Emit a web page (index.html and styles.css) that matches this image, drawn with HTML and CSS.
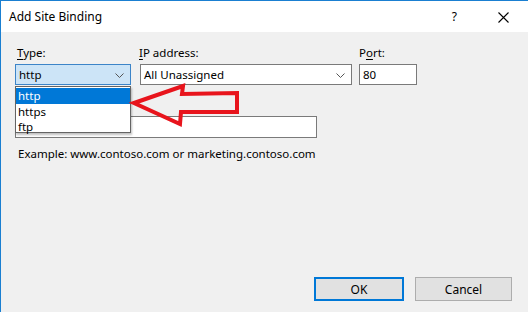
FILE: index.html
```html
<!DOCTYPE html>
<html>
<head>
<meta charset="utf-8">
<link rel="stylesheet" href="styles.css">
</head>
<body>
<div class="dialog">
  <div class="titlebar">
    <span class="title">Add Site Binding</span>
    <span class="help">?</span>
    <svg class="close" width="11" height="11" viewBox="0 0 11 11"><path d="M0.5 0.5 L10.5 10.5 M10.5 0.5 L0.5 10.5" stroke="#000" stroke-width="1.1" fill="none"/></svg>
  </div>
  <div class="content">
    <div class="row">
      <div class="field f-type">
        <label class="lbl lbl-type"><u>T</u>ype:</label>
        <div class="combo combo-active">
          <span>http</span>
          <svg class="chev" width="9" height="5" viewBox="0 0 9 5"><path d="M0.5 0.5 L4.5 4.5 L8.5 0.5" stroke="#555" fill="none"/></svg>
        </div>
      </div>
      <div class="field f-ip">
        <label class="lbl"><u>I</u>P address:</label>
        <div class="combo">
          <span>All Unassigned</span>
          <svg class="chev" width="9" height="5" viewBox="0 0 9 5"><path d="M0.5 0.5 L4.5 4.5 L8.5 0.5" stroke="#555" fill="none"/></svg>
        </div>
      </div>
      <div class="field f-port">
        <label class="lbl">P<u>o</u>rt:</label>
        <div class="input">80</div>
      </div>
    </div>
    <div class="host">
      <div class="lbl spacer"></div>
      <div class="input host-input"></div>
    </div>
    <div class="example">Example: www.contoso.com or marketing.contoso.com</div>
  </div>
  <div class="buttons">
    <button class="btn btn-ok">OK</button>
    <button class="btn btn-cancel">Cancel</button>
  </div>

  <div class="droplist">
    <div class="item sel">http</div>
    <div class="item">https</div>
    <div class="item">ftp</div>
  </div>
  <svg class="arrow" width="528" height="312" viewBox="0 0 528 312">
    <polygon points="134,103 183,86 182,94 237,93 237,112 181,112 180,124" fill="none" stroke="#e8141c" stroke-width="4" stroke-linejoin="miter"/>
  </svg>
</div>
</body>
</html>
```

FILE: styles.css
```css
* { box-sizing: border-box; }
html, body { margin: 0; padding: 0; }
body {
  width: 528px;
  height: 312px;
  overflow: hidden;
  font-family: "Noto Sans", "Open Sans", sans-serif;
  font-size: 11.5px;
  color: #000;
  background: #f0f0f0;
}
.dialog {
  position: relative;
  width: 528px;
  height: 312px;
  border-top: 1px solid #1a7fd1;
  border-left: 1px solid #1a7fd1;
  background: #f0f0f0;
  display: flex;
  flex-direction: column;
}
.titlebar {
  height: 31px;
  background: #fff;
  display: flex;
  align-items: center;
  padding-left: 8px;
  flex: none;
}
.title { flex: 1; font-size: 12px; line-height: 16px; }
.help { font-size: 12px; margin-right: 41px; line-height: 16px; }
.close { margin-right: 19px; margin-top: 1px; }
.content {
  padding: 13px 0 0 14px;
  flex: 1;
}
.row { display: flex; }
.field { display: flex; flex-direction: column; }
.f-type { width: 116px; }
.f-ip { width: 212px; margin-left: 9px; }
.f-port { width: 58px; margin-left: 7px; }
.lbl { line-height: 16px; height: 16px; margin-bottom: 3px; display: block; }
.lbl u { text-decoration: underline; text-underline-offset: 2px; }
.lbl-type { padding-left: 2px; }
.f-ip .lbl { margin-left: -1px; }
.combo {
  height: 21px;
  border: 1px solid #7a7a7a;
  background: #fff;
  display: flex;
  align-items: center;
  padding-left: 3px;
  justify-content: space-between;
  padding-right: 6px;
  line-height: 16px;
}
.combo-active { background: #cce4f7; border-color: #3c84c8; }
.chev { margin-top: 1px; }
.input {
  height: 21px;
  border: 1px solid #7a7a7a;
  background: #fff;
  padding-left: 3px;
  line-height: 19px;
}
.host { margin-top: 12px; }
.host-input { width: 302px; height: 22px; }
.example { margin-top: 8px; padding-left: 3px; line-height: 16px; }
.buttons {
  display: flex;
  justify-content: flex-end;
  gap: 11px;
  padding: 0 16px 11px 0;
  flex: none;
}
.btn {
  font-family: inherit;
  font-size: 12px;
  height: 24px;
  background: #e1e1e1;
  border: 1px solid #adadad;
  padding: 0;
  color: #000;
}
.btn-ok { width: 90px; border: 2px solid #0078d7; }
.btn-cancel { width: 97px; }
.droplist {
  position: absolute;
  left: 14px;
  top: 85px;
  width: 116px;
  height: 47px;
  background: #fff;
  border: 1px solid #646464;
  box-shadow: 1px 2px 2px rgba(0,0,0,0.25);
  padding-top: 1px;
}
.item { height: 15px; line-height: 15px; padding-left: 2px; }
.item.sel { background: #0078d7; color: #fff; height: 16px; }
.arrow { position: absolute; left: -1px; top: -1px; pointer-events: none; }
```
